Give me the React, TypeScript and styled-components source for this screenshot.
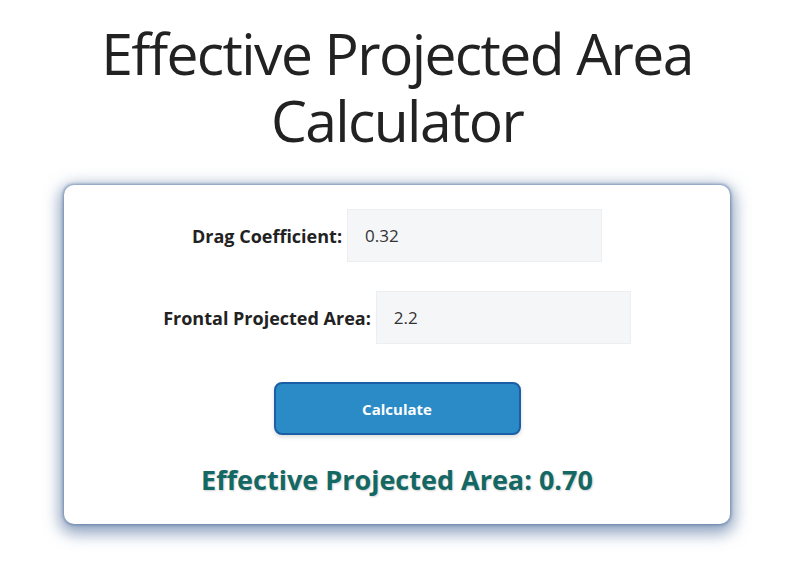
import React, { useState } from "react";
import styled, { createGlobalStyle } from "styled-components";

const Global = createGlobalStyle`
  html, body { margin: 0; padding: 0; background: #ffffff; }
  body { font-family: "Open Sans", "Noto Sans", "Liberation Sans", sans-serif; color: #222; }
`;

const Page = styled.div`
  width: 794px;
  display: flex;
  flex-direction: column;
  align-items: center;
  padding: 20px 0 40px;
`;

const Title = styled.h1`
  margin: 0;
  width: 640px;
  text-align: center;
  font-weight: 400;
  font-size: 57px;
  line-height: 67px;
  color: #222;
  letter-spacing: -1.6px;
`;

const Card = styled.div`
  margin-top: 31px;
  width: 666px;
  box-sizing: border-box;
  background: #fff;
  border-radius: 10px;
  box-shadow: 0 0 3px 1px rgba(70, 105, 150, 0.6), 0 5px 16px 4px rgba(60, 95, 145, 0.6);
  padding: 24px 0 26px;
  display: flex;
  flex-direction: column;
  align-items: center;
`;

const Row = styled.div`
  display: flex;
  align-items: center;
  gap: 5px;
  margin-bottom: 29px;
`;

const Label = styled.label`
  font-weight: 700;
  font-size: 18px;
  color: #222;
`;

const Input = styled.input`
  width: 255px;
  height: 53px;
  box-sizing: border-box;
  background: #f5f6f8;
  border: 1px solid #eceef0;
  padding: 0 17px;
  font-family: inherit;
  font-size: 17px;
  color: #333;
  outline: none;
`;

const Button = styled.button`
  margin-top: 9px;
  width: 247px;
  height: 53px;
  background: #2a8bc6;
  border: 2px solid #1a5ea6;
  border-radius: 8px;
  color: #fff;
  font-family: inherit;
  font-weight: 700;
  font-size: 15px;
  box-shadow: 0 2px 4px rgba(0, 0, 0, 0.15);
  cursor: pointer;
`;

const Result = styled.div`
  margin-top: 26px;
  font-weight: 700;
  font-size: 27px;
  color: #146864;
  text-shadow: 1px 1px 2px rgba(0, 0, 0, 0.18);
`;

export default function App() {
  const [cd, setCd] = useState("0.32");
  const [area, setArea] = useState("2.2");
  const [result, setResult] = useState("0.70");
  const calc = () => {
    const v = parseFloat(cd) * parseFloat(area);
    setResult(isNaN(v) ? "—" : v.toFixed(2));
  };
  return (
    <>
      <Global />
      <Page>
        <Title>Effective Projected Area Calculator</Title>
        <Card>
          <Row>
            <Label>Drag Coefficient:</Label>
            <Input value={cd} onChange={(e) => setCd(e.target.value)} />
          </Row>
          <Row>
            <Label>Frontal Projected Area:</Label>
            <Input value={area} onChange={(e) => setArea(e.target.value)} />
          </Row>
          <Button onClick={calc}>Calculate</Button>
          <Result>Effective Projected Area: {result}</Result>
        </Card>
      </Page>
    </>
  );
}
